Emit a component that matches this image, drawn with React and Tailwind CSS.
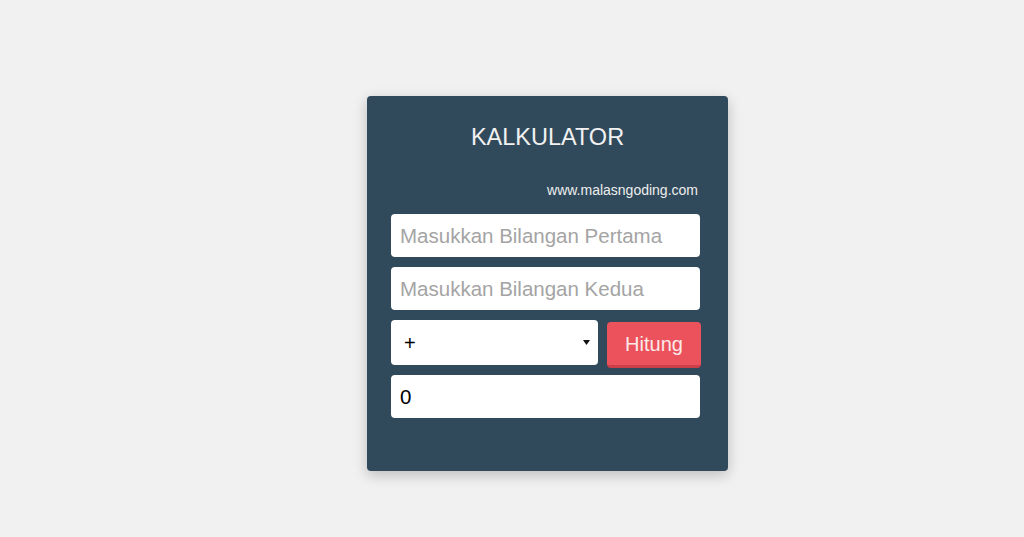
import React, { useState } from 'react';

const App = () => {
  const [a, setA] = useState('');
  const [b, setB] = useState('');
  const [op, setOp] = useState('+');
  const [result, setResult] = useState(0);

  const hitung = () => {
    const x = parseFloat(a) || 0;
    const y = parseFloat(b) || 0;
    if (op === '+') setResult(x + y);
    else if (op === '-') setResult(x - y);
    else if (op === 'x') setResult(x * y);
    else setResult(y === 0 ? 0 : x / y);
  };

  const inputClass =
    "w-[309px] h-[43px] rounded-[4px] bg-white pl-[9px] text-[20.5px] text-black placeholder:text-[#a4a4a4] outline-none";

  return (
    <div className="min-h-[537px] w-full bg-[#f1f1f1] pt-[96px] pl-[367px] font-['Liberation_Sans',Arial,sans-serif]">
      <div className="w-[361px] h-[375px] rounded-[4px] bg-[#304a5c] pt-[27px] pl-[24px] shadow-[0_4px_14px_rgba(0,0,0,0.22)]">
        <h1 className="w-[313px] text-center text-[23.5px] leading-[28px] text-[#f1f1f1]">KALKULATOR</h1>
        <p className="mt-[31px] w-[307px] text-right text-[14px] leading-[16px] text-[#eeeeee]">www.malasngoding.com</p>
        <div className="mt-[16px] flex flex-col gap-[10px]">
          <input
            type="text"
            value={a}
            onChange={(e) => setA(e.target.value)}
            placeholder="Masukkan Bilangan Pertama"
            className={inputClass}
          />
          <input
            type="text"
            value={b}
            onChange={(e) => setB(e.target.value)}
            placeholder="Masukkan Bilangan Kedua"
            className={inputClass}
          />
          <div className="flex h-[45px] items-start gap-[9px]">
            <div className="relative">
              <select
                value={op}
                onChange={(e) => setOp(e.target.value)}
                className="w-[207px] h-[45px] appearance-none rounded-[4px] bg-white pl-[13px] text-[20px] text-black outline-none"
              >
                <option value="+">+</option>
                <option value="-">-</option>
                <option value="x">x</option>
                <option value="/">/</option>
              </select>
              <svg className="pointer-events-none absolute right-[8px] top-[20px]" width="7" height="5" viewBox="0 0 7 5">
                <path d="M0 0h7L3.5 5z" fill="#111" />
              </svg>
            </div>
            <button
              onClick={hitung}
              className="mt-[2px] w-[94px] h-[46px] shrink-0 rounded-[4px] bg-[#ec525b] border-b-[3px] border-[#cc3f48] text-[20px] text-[#fbeaea]"
            >
              Hitung
            </button>
          </div>
          <input
            type="text"
            readOnly
            value={result}
            className={inputClass}
          />
        </div>
      </div>
    </div>
  );
};

export default App;
